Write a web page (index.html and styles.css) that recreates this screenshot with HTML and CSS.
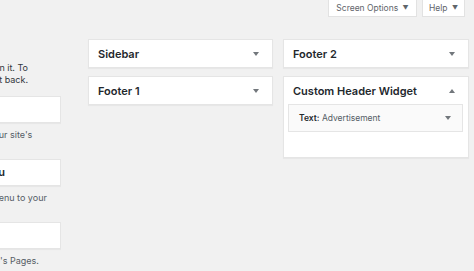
FILE: index.html
```html
<!DOCTYPE html>
<html lang="en">
<head>
    <meta charset="UTF-8">
    <meta name="viewport" content="width=device-width, initial-scale=1.0">
    <title>Widgets</title>
    <link rel="stylesheet" href="styles.css">
</head>
<body>
    <div id="screen-meta-links">
        <button class="meta-tab tab-options">Screen Options <span class="caret">&#9660;</span></button>
        <button class="meta-tab tab-help">Help <span class="caret">&#9660;</span></button>
    </div>
    <div id="widgets">
        <div id="available">
            <div class="available-inner">
                <p class="intro">
                    <span>To activate a widget drag it to a sidebar or click on it. To</span>
                    <span>deactivate a widget and delete its settings, drag it back.</span>
                </p>
                <div class="widget-list">
                    <div class="widget-item">
                        <div class="widget-top">Calendar</div>
                        <p class="widget-desc">A calendar of all your site's<br>Posts.</p>
                    </div>
                    <div class="widget-item">
                        <div class="widget-top">Navigation Menu</div>
                        <p class="widget-desc">Add a navigation menu to your<br>sidebar.</p>
                    </div>
                    <div class="widget-item">
                        <div class="widget-top">Pages</div>
                        <p class="widget-desc">A list of all your site's Pages.</p>
                    </div>
                </div>
            </div>
        </div>
        <div id="sidebars">
            <div class="sidebar-col">
                <div class="sidebar-box">
                    <div class="sidebar-name"><h2>Sidebar</h2><span class="toggle down"></span></div>
                </div>
                <div class="sidebar-box">
                    <div class="sidebar-name"><h2>Footer 1</h2><span class="toggle down"></span></div>
                </div>
            </div>
            <div class="sidebar-col">
                <div class="sidebar-box">
                    <div class="sidebar-name"><h2>Footer 2</h2><span class="toggle down"></span></div>
                </div>
                <div class="sidebar-box open">
                    <div class="sidebar-name"><h2>Custom Header Widget</h2><span class="toggle up"></span></div>
                    <div class="sidebar-widgets">
                        <div class="widget">
                            <span class="widget-title"><b>Text:</b> Advertisement</span>
                            <span class="toggle down"></span>
                        </div>
                    </div>
                </div>
            </div>
        </div>
    </div>
</body>
</html>
```
FILE: styles.css
```css
body {
    margin: 0;
    height: 271px;
    overflow: hidden;
    background-color: #f1f1f1;
    font-family: Inter, "Noto Sans", Arial, sans-serif;
    color: #23282d;
}
#screen-meta-links {
    display: flex;
    justify-content: flex-end;
    gap: 5px;
    padding-right: 9px;
    height: 17px;
}
.meta-tab {
    height: 17px;
    padding: 0;
    background-color: #fff;
    border: 1px solid #e2e2e2;
    border-top: none;
    font-family: inherit;
    font-size: 8.5px;
    color: #5f656b;
}
.tab-options {
    width: 89px;
}
.tab-help {
    width: 43px;
}
.caret {
    font-size: 6px;
    margin-left: 2px;
    vertical-align: 1px;
}
#widgets {
    display: flex;
    align-items: flex-start;
    height: 254px;
    overflow: hidden;
}
#available {
    flex: none;
    width: 61px;
    overflow: hidden;
    padding-top: 45px;
}
.available-inner {
    width: 157px;
    margin-left: -96px;
}
.intro {
    display: flex;
    flex-direction: column;
    align-items: flex-end;
    margin: 0 0 10px;
    padding-right: 33px;
    white-space: nowrap;
    font-size: 9px;
    line-height: 12px;
    color: #32373c;
}
.widget-top {
    height: 25px;
    line-height: 25px;
    padding-left: 10px;
    background-color: #fff;
    border: 1px solid #e5e5e5;
    box-shadow: 0 1px 1px rgba(0, 0, 0, 0.04);
    white-space: nowrap;
    font-size: 11px;
    font-weight: 600;
    color: #23282d;
}
.widget-desc {
    margin: 6px 0;
    padding-left: 13px;
    white-space: nowrap;
    font-size: 9px;
    line-height: 12px;
    color: #555d66;
}
#sidebars {
    display: flex;
    gap: 10px;
    margin-left: 27px;
    padding-top: 22px;
}
.sidebar-col {
    width: 185px;
    display: flex;
    flex-direction: column;
    gap: 8px;
}
.sidebar-col + .sidebar-col {
    width: 186px;
}
.sidebar-box {
    background-color: #fff;
    border: 1px solid #e5e5e5;
    box-shadow: 0 1px 1px rgba(0, 0, 0, 0.04);
}
.sidebar-name {
    display: flex;
    align-items: center;
    justify-content: space-between;
    height: 27px;
    padding: 0 13px 0 9px;
}
.sidebar-name h2 {
    margin: 0;
    font-size: 11px;
    font-weight: 600;
    color: #23282d;
}
.toggle {
    width: 0;
    height: 0;
    border-left: 3px solid transparent;
    border-right: 3px solid transparent;
}
.toggle.down {
    border-top: 4px solid #72777c;
}
.toggle.up {
    border-bottom: 4px solid #72777c;
}
.sidebar-widgets {
    padding: 0 5px 25px 4px;
}
.widget {
    display: flex;
    align-items: center;
    justify-content: space-between;
    height: 26px;
    padding: 0 11px 0 10px;
    background-color: #fafafa;
    border: 1px solid #e5e5e5;
}
.widget-title {
    font-size: 8.5px;
    color: #555d66;
}
.widget-title b {
    font-weight: 600;
    color: #23282d;
}
```
